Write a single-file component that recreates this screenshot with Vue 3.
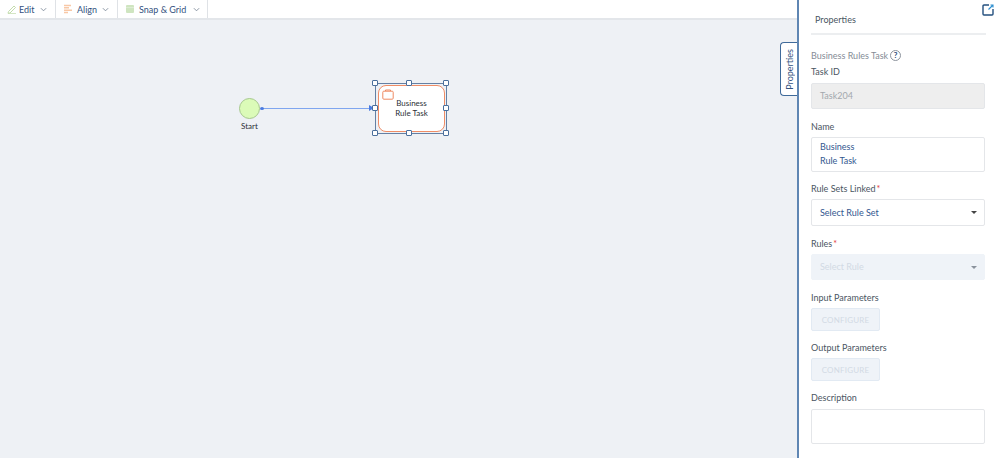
<script setup>
const tools = [
  { label: 'Edit', kind: 'edit' },
  { label: 'Align', kind: 'align' },
  { label: 'Snap & Grid', kind: 'grid' },
]
const handles = [
  [-1, -1], [33, -1], [70, -1],
  [-1, 24], [70, 24],
  [-1, 49], [33, 49], [70, 49],
]
</script>

<template>
  <div class="app">
    <main class="workspace">
      <header class="toolbar">
        <button v-for="t in tools" :key="t.label" class="tool" :class="t.kind">
          <svg v-if="t.kind === 'edit'" class="ticon" viewBox="0 0 10 10" width="10" height="10">
            <path d="M1.5 7.5 L7 2 L8.5 3.5 L3 9 L1 9.3 Z" fill="none" stroke="#c3dcac" stroke-width="1" />
            <path d="M1 9.6 H9" stroke="#c3dcac" stroke-width=".8" />
          </svg>
          <svg v-else-if="t.kind === 'align'" class="ticon" viewBox="0 0 10 10" width="10" height="10">
            <path d="M1 1.5 H8 M1 3.8 H6 M1 6.2 H9 M1 8.5 H5" stroke="#f8c8a6" stroke-width="1.4" />
          </svg>
          <svg v-else class="ticon" viewBox="0 0 10 10" width="10" height="10">
            <rect x="1" y="1" width="8" height="8" rx="1" fill="#cfe5c0" />
            <path d="M1 3.6 H9" stroke="#e8f2df" stroke-width=".7" />
          </svg>
          <span class="tlabel">{{ t.label }}</span>
          <svg class="chev" viewBox="0 0 8 5" width="7" height="5">
            <path d="M1 1 L4 4 L7 1" fill="none" stroke="#7d8998" stroke-width="1" />
          </svg>
        </button>
      </header>

      <div class="canvas">
        <div class="start"></div>
        <div class="start-label">Start</div>
        <div class="edge">
          <i class="edge-dot"></i>
          <i class="edge-arrow"></i>
        </div>
        <div class="selection">
          <div class="task">
            <svg class="task-icon" viewBox="0 0 12 11" width="12" height="11">
              <path d="M3.5 2 V1 H8.5 V2" fill="none" stroke="#ee8a63" stroke-width="1" />
              <rect x=".8" y="2.2" width="10.4" height="8" rx="1" fill="none" stroke="#ee8a63" stroke-width="1" />
            </svg>
            <div class="task-text">Business<br />Rule Task</div>
          </div>
          <i
            v-for="(h, i) in handles"
            :key="i"
            class="handle"
            :style="{ left: h[0] + 'px', top: h[1] + 'px' }"
          ></i>
        </div>
      </div>
    </main>

    <aside class="panel">
      <div class="tab"><span>Properties</span></div>
      <svg class="popout" viewBox="0 0 12 12" width="12" height="12">
        <path d="M7 1 H2 Q1 1 1 2 V10 Q1 11 2 11 H10 Q11 11 11 10 V5" fill="none" stroke="#24507f" stroke-width="1.4" />
        <path d="M6.5 5.5 L10.5 1.5 M8.5 1 H11 V3.5" fill="none" stroke="#2e8fd0" stroke-width="1.1" />
      </svg>
      <h2 class="title">Properties</h2>

      <div class="subtitle">
        Business Rules Task
        <span class="help">?</span>
      </div>

      <label class="lbl lbl-id">Task ID</label>
      <div class="input readonly">Task204</div>

      <label class="lbl">Name</label>
      <div class="input area">Business<br />Rule Task</div>

      <label class="lbl tight">Rule Sets Linked<em>*</em></label>
      <div class="input select">Select Rule Set<i class="caret"></i></div>

      <label class="lbl">Rules<em>*</em></label>
      <div class="input select disabled">Select Rule<i class="caret"></i></div>

      <label class="lbl">Input Parameters</label>
      <button class="config">CONFIGURE</button>

      <label class="lbl tight">Output Parameters</label>
      <button class="config">CONFIGURE</button>

      <label class="lbl tight lbl-desc">Description</label>
      <div class="input area empty"></div>
    </aside>
  </div>
</template>

<style>
html, body { margin: 0; overflow: hidden; }
</style>

<style scoped>
.app {
  display: flex;
  width: 1000px;
  height: 458px;
  overflow: hidden;
  font-family: Lato, "Noto Sans", sans-serif;
  font-size: 9px;
  color: #4a5562;
  background: #eef1f5;
}
.workspace {
  flex: 1;
  min-width: 0;
  display: flex;
  flex-direction: column;
}
.toolbar {
  height: 20px;
  box-sizing: border-box;
  background: #fff;
  border-bottom: 2px solid #e3e6ea;
  display: flex;
  flex: none;
}
.tool {
  display: flex;
  align-items: center;
  box-sizing: content-box;
  height: 18px;
  padding: 0;
  border: 0;
  border-right: 1px solid #dfe2e6;
  background: #fff;
  font: inherit;
  white-space: nowrap;
  color: #33527e;
}
.tool.edit { width: 48px; padding-left: 7px; }
.tool.align { width: 54px; padding-left: 7px; }
.tool.grid { width: 82px; padding-left: 7px; }
.ticon { margin-right: 4px; flex: none; }
.edit .ticon { margin-right: 2px; }
.tlabel { flex: none; }
.chev { margin-left: 5px; flex: none; }
.edit .chev { margin-left: 6px; }
.grid .chev { margin-left: 7px; }
.canvas {
  position: relative;
  flex: 1;
}
.start {
  position: absolute;
  left: 239px;
  top: 78px;
  width: 21px;
  height: 21px;
  box-sizing: border-box;
  border: 1px solid #a6c88e;
  border-radius: 50%;
  background: #dbfbb8;
}
.start-label {
  position: absolute;
  left: 232px;
  top: 101px;
  width: 35px;
  text-align: center;
  font-size: 8px;
  color: #2b2f35;
}
.edge {
  position: absolute;
  left: 261px;
  top: 88px;
  width: 113px;
  height: 1px;
  background: #7fa6ef;
}
.edge-dot {
  position: absolute;
  left: -1px;
  top: -1px;
  width: 4px;
  height: 3px;
  border-radius: 50%;
  background: #4a7be0;
}
.edge-arrow {
  position: absolute;
  right: 0;
  top: -3px;
  border-left: 5px solid #4a7be0;
  border-top: 3.5px solid transparent;
  border-bottom: 3.5px solid transparent;
}
.selection {
  position: absolute;
  left: 375px;
  top: 63px;
  width: 72px;
  height: 51px;
  box-sizing: border-box;
  border: 1px solid #6580a3;
}
.task {
  position: absolute;
  left: 2px;
  top: 1px;
  width: 67px;
  height: 47px;
  box-sizing: border-box;
  border: 1px solid #ef8d66;
  border-radius: 8px;
  background: #fff;
}
.task-icon { position: absolute; left: 3px; top: 3px; }
.task-text {
  position: absolute;
  left: 0;
  right: 0;
  top: 12px;
  text-align: center;
  font-size: 8px;
  line-height: 10px;
  color: #2b2f35;
}
.handle {
  position: absolute;
  width: 6px;
  height: 6px;
  margin: -3px 0 0 -3px;
  box-sizing: border-box;
  border: 1px solid #4a6f9c;
  border-radius: 1px;
  background: #fff;
}
.panel {
  position: relative;
  flex: none;
  box-sizing: border-box;
  width: 203px;
  height: 458px;
  padding: 0 14px 0 12px;
  background: #fff;
  border-left: 2px solid #5f86b3;
}
.tab {
  position: absolute;
  left: -19px;
  top: 42px;
  width: 17px;
  height: 54px;
  box-sizing: border-box;
  border: 1px solid #3f6a9a;
  border-right: 0;
  border-radius: 4px 0 0 4px;
  background: #fff;
  display: flex;
  align-items: center;
  justify-content: center;
}
.tab span {
  writing-mode: vertical-rl;
  transform: rotate(180deg);
  font-size: 9px;
  color: #33527e;
}
.popout { position: absolute; left: 183px; top: 4px; }
.title {
  margin: 0;
  height: 35px;
  box-sizing: border-box;
  padding: 14px 0 0 4px;
  border-bottom: 2px solid #eceef0;
  font-size: 9px;
  line-height: 12px;
  font-weight: 400;
  color: #4a5562;
}
.subtitle {
  display: flex;
  align-items: center;
  gap: 2px;
  margin-top: 14px;
  height: 12px;
  color: #858c96;
}
.help {
  width: 11px;
  height: 11px;
  box-sizing: border-box;
  border: 1px solid #8d949d;
  border-radius: 50%;
  font-size: 8px;
  font-weight: 700;
  line-height: 9px;
  text-align: center;
  color: #2a4a77;
}
.lbl {
  display: block;
  height: 12px;
  line-height: 12px;
  margin: 12px 0 4px;
}
.tight { margin-top: 11px; }
.lbl-desc { margin-bottom: 5px; }
.lbl-id { margin-top: 5px; margin-bottom: 5px; }
.lbl em { color: #e23b3b; font-style: normal; margin-left: 1px; }
.input {
  position: relative;
  box-sizing: border-box;
  width: 174px;
  height: 27px;
  padding: 0 8px;
  border: 1px solid #e4e6e9;
  border-radius: 2px;
  background: #fff;
  line-height: 25px;
  color: #33588f;
}
.readonly {
  background: #eeeeee;
  color: #a3a8ad;
  height: 26px;
  line-height: 24px;
}
.area {
  height: 35px;
  line-height: 14px;
  padding-top: 2px;
}
.disabled {
  height: 26px;
  line-height: 24px;
  background: #eff3f8;
  border-color: #eff3f8;
  color: #d2dae4;
}
.caret {
  position: absolute;
  right: 7px;
  top: 11px;
  border-top: 3px solid #444;
  border-left: 3px solid transparent;
  border-right: 3px solid transparent;
}
.disabled .caret { border-top-color: #8a929c; }
.config {
  display: block;
  box-sizing: border-box;
  width: 69px;
  height: 23px;
  padding: 0;
  border: 1px solid #e2eaf3;
  border-radius: 2px;
  background: #eff3f8;
  font: inherit;
  font-size: 8px;
  letter-spacing: .2px;
  color: #d2dae4;
}
</style>
